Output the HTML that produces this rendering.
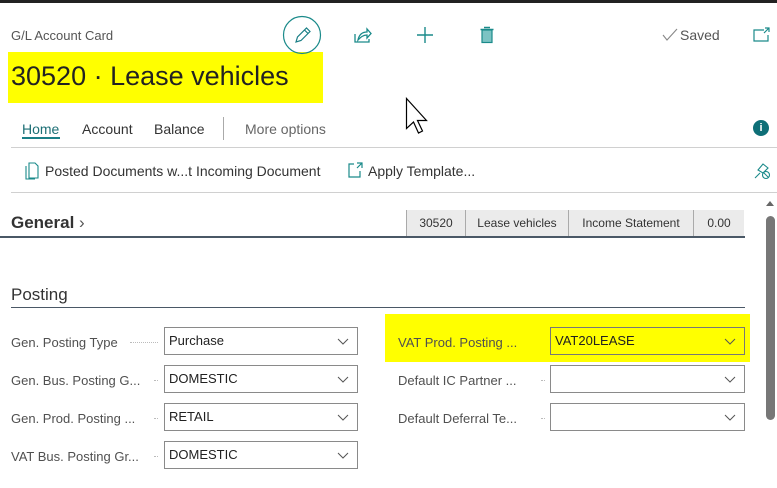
<!DOCTYPE html>
<html><head><meta charset="utf-8"><style>
body{margin:0;width:777px;height:488px;background:#fff;position:relative;overflow:hidden;font-family:"Liberation Sans",sans-serif;color:#212121}
.a{position:absolute;white-space:nowrap}
.lbl{font-size:13px;color:#505050}
.fld{position:absolute;height:28px;border:1px solid #8a8a8a;background:#fff;box-sizing:border-box;font-size:13px;line-height:26px;padding-left:4px;color:#212121}
.fld svg{position:absolute;right:8px;top:10px}
.dots{position:absolute;border-top:1px dotted #bbb;height:0}
.cell{position:absolute;top:210px;height:27px;background:#ebebeb;font-size:12px;line-height:27px;text-align:center;color:#333;border-right:1px solid #aaa;box-sizing:border-box}
</style></head><body>
<div class="a" style="left:0;top:0;width:777px;height:3px;background:#222"></div>
<div class="a" style="left:11px;top:28px;font-size:13px;color:#555">G/L Account Card</div>
<div class="a" style="left:8px;top:52px;width:315px;height:51px;background:#ffff00"></div>
<div class="a" style="left:11px;top:61px;font-size:27px;color:#222">30520 · Lease vehicles</div>
<svg class="a" style="left:282px;top:15px" width="40" height="40"><circle cx="20" cy="20" r="18.5" fill="none" stroke="#1a8a8a" stroke-width="1.2"/><path d="M14 27l1.5-5 9-9 3.5 3.5-9 9z M22.5 15l3.5 3.5" fill="none" stroke="#1a7f86" stroke-width="1.2"/></svg>
<svg class="a" style="left:353px;top:25px" width="20" height="20"><path d="M2 9v8h14v-3 M5 15c1-5 4-8 9-8V4l4 4.5-4 4.5V10c-4 0-6 2-9 5z" fill="none" stroke="#1a8a8a" stroke-width="1.3"/></svg>
<svg class="a" style="left:416px;top:26px" width="18" height="18"><path d="M9 1v16M1 9h16" stroke="#1a8a8a" stroke-width="1.4"/></svg>
<svg class="a" style="left:479px;top:26px" width="16" height="18"><path d="M5 1.5h6M1.5 3.5h13" stroke="#1a8a8a" stroke-width="1.4"/><rect x="3" y="4" width="10" height="12.5" fill="#7cc3c3" stroke="#1a8a8a" stroke-width="1.2"/></svg>
<svg class="a" style="left:662px;top:28px" width="16" height="14"><path d="M1 7l4 5 10-11" fill="none" stroke="#888" stroke-width="1.1"/></svg>
<div class="a" style="left:680px;top:27px;font-size:14px;color:#555">Saved</div>
<svg class="a" style="left:753px;top:27px" width="18" height="16"><path d="M11 3H1v11h14V8 M12 1h4v4M16 1l-5 5" fill="none" stroke="#1a8a8a" stroke-width="1.2"/></svg>
<svg class="a" style="left:405px;top:97px" width="28" height="40"><path d="M1.5 1.5v30l7-6.5 5 11 4-2-5-10.5h9z" fill="#fff" stroke="#000" stroke-width="1.2"/></svg>
<div class="a" style="left:22px;top:121px;font-size:14px;color:#1d6f75">Home</div>
<div class="a" style="left:22px;top:137px;width:38px;height:2px;background:#1a7f86"></div>
<div class="a" style="left:82px;top:121px;font-size:14px;color:#333">Account</div>
<div class="a" style="left:154px;top:121px;font-size:14px;color:#333">Balance</div>
<div class="a" style="left:223px;top:117px;width:1px;height:23px;background:#aaa"></div>
<div class="a" style="left:245px;top:121px;font-size:14px;color:#666">More options</div>
<div class="a" style="left:753px;top:120px;width:16px;height:16px;border-radius:50%;background:#0e6f77;color:#fff;font-size:11px;font-weight:bold;text-align:center;line-height:16px">i</div>
<div class="a" style="left:11px;top:147px;width:766px;height:1px;background:#d0d0d0"></div>
<svg class="a" style="left:25px;top:162px" width="14" height="18"><path d="M4 1h6l3 3v12H4z M1 4v13h9" fill="none" stroke="#1a8a8a" stroke-width="1.1"/></svg>
<div class="a" style="left:45px;top:163px;font-size:14px;color:#333">Posted Documents w...t Incoming Document</div>
<svg class="a" style="left:348px;top:162px" width="16" height="16"><path d="M6 2H1v13h11V9 M9 1h5v5M14 1l-5 5" fill="none" stroke="#1a8a8a" stroke-width="1.2"/></svg>
<div class="a" style="left:368px;top:163px;font-size:14px;color:#333">Apply Template...</div>
<svg class="a" style="left:753px;top:162px" width="18" height="18"><path d="M2 16l5-5 M5 8l5-6 5 4-5 5z" fill="none" stroke="#1a8a8a" stroke-width="1.1"/><circle cx="13" cy="13" r="3.5" fill="#fff" stroke="#1a8a8a" stroke-width="1.1"/><path d="M10.5 10.5l5 5" stroke="#1a8a8a"/></svg>
<div class="a" style="left:11px;top:192px;width:766px;height:1px;background:#d0d0d0"></div>
<div class="a" style="left:11px;top:213px;font-size:17px;font-weight:bold;color:#333">General<span style="font-weight:normal;color:#555"> ›</span></div>
<div class="cell" style="left:406px;width:60px;border-left:1px solid #aaa">30520</div>
<div class="cell" style="left:466px;width:103px">Lease vehicles</div>
<div class="cell" style="left:569px;width:125px">Income Statement</div>
<div class="cell" style="left:694px;width:50px;border-right:none">0.00</div>
<div class="a" style="left:0;top:236px;width:745px;height:2px;background:#4a5866"></div>
<div class="a" style="left:766px;top:201px;width:0;height:0;border-left:4px solid transparent;border-right:4px solid transparent;border-bottom:5px solid #666"></div>
<div class="a" style="left:766px;top:216px;width:9px;height:204px;border-radius:5px;background:#777"></div>
<div class="a" style="left:11px;top:285px;font-size:17px;color:#333">Posting</div>
<div class="a" style="left:11px;top:307px;width:734px;height:1px;background:#4a5866"></div>
<div class="a" style="left:385px;top:314px;width:365px;height:48px;background:#ffff00"></div>

<div class="a lbl" style="left:11px;top:335px">Gen. Posting Type</div><div class="dots" style="left:130px;top:342px;width:28px"></div>
<div class="fld" style="left:164px;top:327px;width:194px">Purchase<svg width="12" height="7"><path d="M1 1l5 5 5-5" fill="none" stroke="#555"/></svg></div>
<div class="a lbl" style="left:11px;top:373px">Gen. Bus. Posting G...</div><div class="dots" style="left:154px;top:380px;width:4px"></div>
<div class="fld" style="left:164px;top:365px;width:194px">DOMESTIC<svg width="12" height="7"><path d="M1 1l5 5 5-5" fill="none" stroke="#555"/></svg></div>
<div class="a lbl" style="left:11px;top:411px">Gen. Prod. Posting ...</div><div class="dots" style="left:154px;top:418px;width:4px"></div>
<div class="fld" style="left:164px;top:403px;width:194px">RETAIL<svg width="12" height="7"><path d="M1 1l5 5 5-5" fill="none" stroke="#555"/></svg></div>
<div class="a lbl" style="left:11px;top:449px">VAT Bus. Posting Gr...</div><div class="dots" style="left:154px;top:456px;width:4px"></div>
<div class="fld" style="left:164px;top:441px;width:194px">DOMESTIC<svg width="12" height="7"><path d="M1 1l5 5 5-5" fill="none" stroke="#555"/></svg></div>

<div class="a lbl" style="left:398px;top:335px">VAT Prod. Posting ...</div>
<div class="fld" style="left:550px;top:327px;width:195px;background:#ffff00;border-color:#777">VAT20LEASE<svg width="12" height="7"><path d="M1 1l5 5 5-5" fill="none" stroke="#555"/></svg></div>
<div class="a lbl" style="left:398px;top:373px">Default IC Partner ...</div><div class="dots" style="left:541px;top:380px;width:4px"></div>
<div class="fld" style="left:550px;top:365px;width:195px"><svg width="12" height="7"><path d="M1 1l5 5 5-5" fill="none" stroke="#555"/></svg></div>
<div class="a lbl" style="left:398px;top:411px">Default Deferral Te...</div><div class="dots" style="left:541px;top:418px;width:4px"></div>
<div class="fld" style="left:550px;top:403px;width:195px"><svg width="12" height="7"><path d="M1 1l5 5 5-5" fill="none" stroke="#555"/></svg></div>
</body></html>
